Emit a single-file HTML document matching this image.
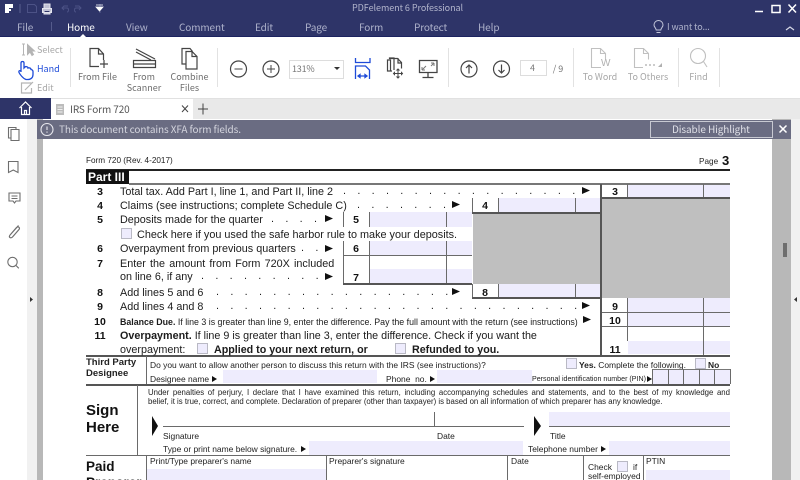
<!DOCTYPE html>
<html><head><meta charset="utf-8"><style>
html,body{margin:0;padding:0;width:800px;height:480px;overflow:hidden;background:#fff}
#r{position:relative;width:800px;height:480px;overflow:hidden;font-family:"Liberation Sans",sans-serif;color:#1a1a1a}
#r div,#r span{position:absolute;white-space:nowrap}
.u{font-family:"Noto Sans CJK SC","DejaVu Sans",sans-serif;line-height:14px}
.tab{top:20px;font-size:10px;letter-spacing:-.1px;color:#aeb2cb}
.rb{font-size:9px;color:#6e6e6e;text-align:center;transform:translateX(-50%);line-height:12px}
.lb{font-size:9px;color:#6e6e6e;line-height:12px}
.dim{color:#a8a8a8}
.sep{width:1px;top:48px;height:39px;background:#e2e2e2}
.t{font-size:10.8px;line-height:12px;color:#1c1c1c}
.d{font-size:10.85px;line-height:12px;color:#1c1c1c;word-spacing:8.300px}
.n{font-size:10.5px;font-weight:bold;line-height:12px;color:#111;text-align:center}
.s{font-size:8.45px;line-height:10px;color:#222}
.f{background:#eeecfd}
.h{background:#6a6a6a;height:1px}
.hh{background:#555;height:2px}
.v{background:#6a6a6a;width:1px}
.vv{background:#555;width:2px}
.g{background:#bfbfbf}
.cb{width:9px;height:9px;background:#eeecfd;border:1px solid #b9b9c4}
svg{position:absolute}
</style></head><body><div id="r">
<!-- title bar -->
<div style="left:0;top:0;width:800px;height:37px;background:#2e3468"></div>
<div style="left:0;top:36px;width:800px;height:1px;background:#1c2360"></div>
<svg style="left:0;top:0" width="800" height="40" fill="none">
<path d="M80 37l3-3 3 3z" fill="#fff"/>
<path d="M5 4h8v4H9v1h2v2H9v2H5z" fill="#fff"/>
<path d="M20 4v9M100 4v9" stroke="#5a6090"/>
<path d="M27.500 4.500h7l2 2v6h-9z" stroke="#4c5286"/>
<path d="M44 8V4h6v4M42.500 8.500h9v4h-9zM44 11v3h6v-3" stroke="#e4e5ee" fill="#bfc1d4"/>
<path d="M68 6h-4l-2 2 2 2M62 8h5c2 0 2 4 0 4M75 6h4l2 2-2 2M81 8h-5c-2 0-2 4 0 4" stroke="#4c5286"/>
<path d="M96 5h7M96 7h7l-3.500 4z" stroke="#fff" fill="#fff" stroke-width=".8"/>
<path d="M755 11.500h8" stroke="#fff" stroke-width="1.500"/>
<path d="M772 5.500h8v7h-8z" stroke="#fff" stroke-width="1.500"/>
<path d="M788.500 4.500l7.500 8M796 4.500l-7.500 8" stroke="#fff" stroke-width="1.500"/>
<path d="M51.500 22v9" stroke="#555b8c"/>
<path d="M654 25a4.500 4.500 0 1 1 9 0c0 2-2 3-2.200 5h-4.600c-.2-2-2.200-3-2.200-5zM656.500 32.500h4" stroke="#c3c6da"/>
<path d="M786 30l4-3 4 3" stroke="#d6d8e6" stroke-width="1.200"/>
</svg>
<div class="u" style="left:352px;top:1px;font-size:9px;letter-spacing:-.05px;color:#b2b5cc">PDFelement 6 Professional</div>
<div class="u tab" style="left:17px">File</div>
<div class="u tab" style="left:67px;color:#fff">Home</div>
<div class="u tab" style="left:126px">View</div>
<div class="u tab" style="left:179px">Comment</div>
<div class="u tab" style="left:255px">Edit</div>
<div class="u tab" style="left:305px">Page</div>
<div class="u tab" style="left:359px">Form</div>
<div class="u tab" style="left:414px">Protect</div>
<div class="u tab" style="left:478px">Help</div>
<div class="u tab" style="left:667px;font-size:9px">I want to...</div>

<!-- ribbon icons -->
<svg style="left:0;top:37px" width="800" height="62" fill="none" stroke="#444">
<g stroke="#b4b4b4"><path d="M22 7h3M22 18h3M23.500 7v11"/><path d="M27.500 7.500v10l2.500-2.500 2 3.500 1.500-1-2-3.500h3z" fill="#b4b4b4"/></g>
<path d="M22 35v-9c0-2 3-2 3 0v5l1-1c1-1 3 0 3 1 1-.5 3 0 3 1.500 1 0 2 1 2 2v3c0 3-2 5-5 5h-2c-3-1-6-5-7-7-.5-2 1-2.500 2-1z" stroke="#1e4bd8" stroke-width="1.300" transform="translate(-1 0)"/>
<g stroke="#b4b4b4"><path d="M31.500 46h-10v10h10v-5M25 53l8-8" stroke-width="1.200"/></g>
<!-- from file -->
<path d="M99 29.500h-9V11.500h8.500l5 5.500v6M98.500 11.500v5.500h5M100 27h8M104 23v8" stroke-width="1.200"/>
<!-- scanner -->
<path d="M136 12l19 10M136 15l15 8M133.500 23.500h22v7h-22zM134 27h21" stroke-width="1.200"/>
<!-- combine -->
<path d="M186 27h-4V11.500h8l2.500 3M186 14.500h6l5 5v12.500h-11zM192 14.500v5h5" stroke-width="1.200"/>
<circle cx="238.500" cy="32" r="8" stroke-width="1.200"/><path d="M234.500 32h8"/>
<circle cx="271" cy="32" r="8" stroke-width="1.200"/><path d="M267 32h8M271 28v8"/>
<g stroke="#1e4bd8" stroke-width="1.300"><path d="M355.500 21v4.500h14.500V21M355.500 42V29h10l4 4v9"/><path d="M358 39h9M358 39l2-1.500v3zM367 39l-2-1.500v3z"/></g>
<path d="M394 33V21h-4.500v.5h8l4 4v6M392 34h-1.500V23h-3v11h3M398 21v5h4" stroke-width="1.200"/>
<path d="M398 32v9M393.500 36.500h9M398 32l-1 1h2zM398 41l-1-1h2zM393.500 36.500l1-1v2zM402.500 36.500l-1-1v2z"/>
<path d="M419.500 23.500h17.500v12h-17.500zM428 36v4M422.500 40.500h11" stroke-width="1.300"/>
<path d="M422 33l4-4M422 33v-3M422 33h3M431 26h3M434 26v3M434 26l-3 3" stroke="#777"/>
<circle cx="469" cy="32" r="8" stroke-width="1.200"/><path d="M469 36.500v-8.500M466 31l3-3 3 3" stroke-width="1.200"/>
<circle cx="501.500" cy="32" r="8" stroke-width="1.200"/><path d="M501.500 27.500v8.500M498.500 33l3 3 3-3" stroke-width="1.200"/>
<g stroke="#c0c0c0" stroke-width="1.100"><path d="M601 30.500h-9.500V11.500h9l5 5v6M600.500 11.500v5h5"/><path d="M643 30.500h-8.500V11.500h9l5 5v6M643.500 11.500v5h5"/><circle cx="698" cy="19" r="7.500"/><path d="M703.500 24.500l3.500 5.500"/></g>
<path d="M645 28h2M649 28h2M653 28h2" stroke="#9a9a9a"/>
<path d="M658 30h4v-4z" fill="#b0b0b0" stroke="none"/>
</svg>
<div style="left:601px;top:59px;font-size:10px;color:#b0b0b0;line-height:10px">W</div>
<div class="u rb" style="left:97.500px;top:71px">From File</div>
<div class="u rb" style="left:144px;top:71px">From</div>
<div class="u rb" style="left:144px;top:82px">Scanner</div>
<div class="u rb" style="left:189.500px;top:71px">Combine</div>
<div class="u rb" style="left:189.500px;top:82px">Files</div>
<div class="u lb dim" style="left:37px;top:44px">Select</div>
<div class="u lb" style="left:37px;top:63px;color:#1e4bd8">Hand</div>
<div class="u lb dim" style="left:37px;top:82px">Edit</div>
<div class="u rb dim" style="left:600px;top:71px">To Word</div>
<div class="u rb dim" style="left:648px;top:71px">To Others</div>
<div class="u rb dim" style="left:698.500px;top:71px">Find</div>
<div class="u rb" style="left:558px;top:63px;color:#777">/ 9</div>
<div class="sep" style="left:70px"></div><div class="sep" style="left:217px"></div><div class="sep" style="left:448px"></div><div class="sep" style="left:573px"></div><div class="sep" style="left:678px"></div><div class="sep" style="left:719px"></div>
<div style="left:289px;top:60px;width:53px;height:17px;border:1px solid #ddd"></div>
<div class="u" style="left:292px;top:62px;font-size:9px;letter-spacing:-.2px;color:#777">131%</div>
<svg style="left:334px;top:67px" width="7" height="4"><path d="M0 0h6l-3 3z" fill="#333"/></svg>
<div style="left:520px;top:60px;width:25px;height:14px;border:1px solid #ddd"></div>
<div class="u" style="left:530px;top:61px;font-size:9px;color:#777">4</div>

<!-- tab bar -->
<div style="left:0;top:98px;width:800px;height:21px;background:#e9e9e9;border-top:1px solid #e1e1e1;box-sizing:border-box"></div>
<div style="left:0;top:98px;width:51px;height:21px;background:#2e3468"></div>
<div style="left:51px;top:99px;width:142px;height:20px;background:#fff"></div>
<svg style="left:0;top:98px" width="215" height="22" fill="none">
<path d="M19.500 10l6-6 6 6M21.500 9v7.500h8V9M24.500 16.500v-4h2v4" stroke="#fff" stroke-width="1.200"/>
<path d="M56 6h8v11h-8z" fill="#bcbcbc"/><path d="M57.500 9h5M57.500 11.500h5M57.500 14h5" stroke="#fff" stroke-width=".7"/>
<path d="M182 7.500l6 6.500M188 7.500l-6 6.500M198 11h10M203 5.500v11" stroke="#444" stroke-width="1"/>
</svg>
<div class="u" style="left:70px;top:102px;font-size:10px;letter-spacing:-.1px;color:#555">IRS Form 720</div>

<!-- viewer -->
<div style="left:0;top:119px;width:27px;height:361px;background:#fff"></div>
<div style="left:27px;top:119px;width:10px;height:361px;background:#f1f1f1"></div>
<div class="g" style="left:37px;top:119px;width:6px;height:361px;background:#b8b8b8"></div>
<div style="left:772px;top:119px;width:19px;height:361px;background:#b8b8b8"></div>
<div style="left:791px;top:119px;width:9px;height:361px;background:#f1f1f1"></div>
<div style="left:783px;top:243px;width:4px;height:14px;background:#6e6e6e"></div>
<svg style="left:0;top:119px" width="800" height="190" fill="none">
<g stroke="#6e6e6e" stroke-width="1.100">
<path d="M11 10.500h8v11h-8zM11 19H8.500V8.500h7.500v2"/>
<path d="M8.500 42.500h9.500v11l-4.750-2.500-4.750 2.500z"/>
<path d="M9 74h11v8h-4l-1.500 2-1.500-2H9zM11.500 77h6M11.500 79.500h6"/>
<path d="M18 107l-8 9c-2.500 2.500 0 4.500 2 2.500l6.500-7.500c1.500-2-1-3.500-2.500-2l-6 7" stroke-width="1.200" transform="translate(.5 -.5)"/>
<circle cx="12.500" cy="143" r="4.700"/><path d="M16 146.500l2.800 2.800"/>
</g>
<path d="M30 178l3 2.500-3 2.500zM797 178l-3 2.500 3 2.500z" fill="#333"/>
</svg>

<!-- page form -->
<div class="s" style="left:86px;top:156px;font-size:8.2px">Form 720 (Rev. 4-2017)</div>
<div class="s" style="left:699px;top:157px;font-size:8.2px">Page</div>
<div style="left:722px;top:154px;font-size:13px;font-weight:bold;line-height:14px;color:#111">3</div>
<div class="hh" style="left:86px;top:169px;width:644px;background:#222"></div>
<div style="left:86px;top:170px;width:43px;height:14px;background:#111"></div>
<div style="left:88px;top:170px;color:#fff;font-size:12px;font-weight:bold;line-height:14px">Part III</div>
<div class="h" style="left:129px;top:183px;width:601px;height:2px;background:#777"></div>

<!-- fills -->
<div class="f" style="left:628px;top:185px;width:102px;height:13px"></div>
<div class="g" style="left:602px;top:199px;width:128px;height:99px"></div>
<div class="g" style="left:473px;top:213px;width:128px;height:71px"></div>
<div class="f" style="left:498px;top:198px;width:103px;height:14px"></div>
<div class="f" style="left:498px;top:284px;width:103px;height:14px"></div>
<div class="f" style="left:369px;top:212px;width:103px;height:15px"></div>
<div class="f" style="left:369px;top:241px;width:103px;height:14px"></div>
<div class="f" style="left:369px;top:269px;width:103px;height:14px"></div>
<div class="f" style="left:628px;top:298px;width:102px;height:14px"></div>
<div class="f" style="left:628px;top:313px;width:102px;height:13px"></div>
<div class="f" style="left:628px;top:341px;width:102px;height:13px"></div>

<!-- lines right -->
<div class="vv" style="left:600px;top:184px;width:2px;height:171px"></div>
<div class="v" style="left:627px;top:184px;height:14px"></div>
<div class="v" style="left:703px;top:184px;height:14px"></div>
<div class="hh" style="left:600px;top:197px;width:130px"></div>
<div class="v" style="left:703px;top:298px;height:57px"></div>
<div class="v" style="left:627px;top:298px;height:43px"></div>
<div class="h" style="left:602px;top:312px;width:128px"></div>
<div class="h" style="left:602px;top:326px;width:128px"></div>
<div class="hh" style="left:86px;top:355px;width:644px"></div>
<!-- lines mid -->
<div class="v" style="left:472px;top:198px;height:15px"></div>
<div class="v" style="left:498px;top:198px;height:14px"></div>
<div class="v" style="left:575px;top:198px;height:14px"></div>
<div class="hh" style="left:472px;top:212px;width:129px"></div>
<div class="v" style="left:472px;top:284px;height:14px"></div>
<div class="v" style="left:498px;top:284px;height:14px"></div>
<div class="v" style="left:575px;top:284px;height:14px"></div>
<div class="hh" style="left:472px;top:297px;width:129px"></div>
<!-- lines left -->
<div class="v" style="left:343px;top:212px;height:15px"></div>
<div class="v" style="left:369px;top:212px;height:15px"></div>
<div class="v" style="left:446px;top:212px;height:15px"></div>
<div class="v" style="left:343px;top:241px;height:43px"></div>
<div class="v" style="left:369px;top:241px;height:43px"></div>
<div class="v" style="left:446px;top:241px;height:43px"></div>
<div class="h" style="left:343px;top:255px;width:129px"></div>
<div class="hh" style="left:343px;top:283px;width:129px"></div>

<!-- numbers -->
<div class="n" style="left:90px;top:186px;width:20px">3</div>
<div class="n" style="left:90px;top:200px;width:20px">4</div>
<div class="n" style="left:90px;top:214px;width:20px">5</div>
<div class="n" style="left:90px;top:243px;width:20px">6</div>
<div class="n" style="left:90px;top:258px;width:20px">7</div>
<div class="n" style="left:90px;top:287px;width:20px">8</div>
<div class="n" style="left:90px;top:301px;width:20px">9</div>
<div class="n" style="left:90px;top:316px;width:20px">10</div>
<div class="n" style="left:90px;top:330px;width:20px">11</div>
<div class="n" style="left:604px;top:186px;width:22px">3</div>
<div class="n" style="left:474px;top:200px;width:22px">4</div>
<div class="n" style="left:345px;top:214px;width:22px">5</div>
<div class="n" style="left:345px;top:243px;width:22px">6</div>
<div class="n" style="left:345px;top:272px;width:22px">7</div>
<div class="n" style="left:474px;top:287px;width:22px">8</div>
<div class="n" style="left:604px;top:301px;width:22px">9</div>
<div class="n" style="left:604px;top:315px;width:22px">10</div>
<div class="n" style="left:604px;top:344px;width:22px">11</div>

<!-- text rows -->
<div class="t" style="left:120px;top:186px">Total tax. Add Part I, line 1, and Part II, line 2</div>
<div class="d" style="left:343px;top:185px">. . . . . . . . . . . . . . . . .</div>
<div class="t" style="left:120px;top:200px">Claims (see instructions; complete Schedule C)</div>
<div class="d" style="left:357px;top:199px">. . . . . . .</div>
<div class="t" style="left:120px;top:214px">Deposits made for the quarter</div>
<div class="d" style="left:271px;top:213px">. . . .</div>
<div class="cb" style="left:121px;top:228px"></div>
<div class="t" style="left:137px;top:229px;font-size:10.85px">Check here if you used the safe harbor rule to make your deposits.</div>
<div class="t" style="left:120px;top:243px">Overpayment from previous quarters</div>
<div class="d" style="left:301px;top:242px">. .</div>
<div class="t" style="left:120px;top:258px;word-spacing:1.200px">Enter the amount from Form 720X included</div>
<div class="t" style="left:120px;top:271px">on line 6, if any</div>
<div class="d" style="left:201px;top:270px">. . . . . . . . .</div>
<div class="t" style="left:120px;top:287px">Add lines 5 and 6</div>
<div class="d" style="left:216px;top:286px">. . . . . . . . . . . . . . . . .</div>
<div class="t" style="left:120px;top:301px">Add lines 4 and 8</div>
<div class="d" style="left:216px;top:300px">. . . . . . . . . . . . . . . . . . . . . . . . . .</div>
<div class="t" style="left:120px;top:316px;font-size:9.200px;transform:scaleX(.96);transform-origin:0 50%"><b>Balance Due.</b> If line 3 is greater than line 9, enter the difference. Pay the full amount with the return (see instructions)</div>
<div class="t" style="left:120px;top:330px;font-size:10.75px"><b>Overpayment.</b> If line 9 is greater than line 3, enter the difference. Check if you want the</div>
<div class="t" style="left:120px;top:344px">overpayment:</div>
<div class="cb" style="left:197px;top:343px"></div>
<div class="t" style="left:214px;top:344px;font-weight:bold;font-size:10.7px">Applied to your next return, or</div>
<div class="cb" style="left:395px;top:343px"></div>
<div class="t" style="left:412px;top:344px;font-weight:bold;font-size:10.7px">Refunded to you.</div>
<svg style="left:0;top:180px" width="800" height="280" fill="#111">
<path d="M582 7v7l8-3.500zM452 21v7l8-3.500zM325 35v7l8-3.500zM325 65v7l8-3.500zM325 93v7l8-3.500zM452 108v7l8-3.500zM582 122v7l8-3.500zM583 136v7l8-3.500z"/>
<path d="M152 236v20l6-10zM534 236v20l7-10z"/>
<path d="M212 196v6l5-3zM430 196v6l5-3zM647 196v6l5-3zM301 266v6l5-3zM601 266v6l5-3z"/>
</svg>

<!-- third party -->
<div style="left:86px;top:357px;font-size:9.500px;font-weight:bold;line-height:11px;color:#222">Third Party<br>Designee</div>
<div class="v" style="left:146px;top:356px;height:28px"></div>
<div class="s" style="left:150px;top:360px">Do you want to allow another person to discuss this return with the IRS (see instructions)?</div>
<div class="cb" style="left:566px;top:358px"></div>
<div class="s" style="left:579px;top:360px"><b>Yes.</b> Complete the following.</div>
<div class="cb" style="left:695px;top:358px"></div>
<div class="s" style="left:708px;top:360px"><b>No</b></div>
<div class="s" style="left:150px;top:374px">Designee name</div>
<div class="f" style="left:223px;top:370px;width:154px;height:13px"></div>
<div class="s" style="left:386px;top:374px">Phone &nbsp;no.</div>
<div class="f" style="left:437px;top:370px;width:95px;height:13px"></div>
<div class="s" style="left:532px;top:374px;font-size:7.100px">Personal identification number (PIN)</div>
<div class="f" style="left:652px;top:369px;width:78px;height:14px;border-top:1px solid #777"></div>
<div class="v" style="left:652px;top:369px;height:15px"></div><div class="v" style="left:668px;top:369px;height:15px"></div><div class="v" style="left:683px;top:369px;height:15px"></div><div class="v" style="left:699px;top:369px;height:15px"></div><div class="v" style="left:714px;top:369px;height:15px"></div><div class="v" style="left:730px;top:369px;height:15px"></div>
<div class="hh" style="left:86px;top:384px;width:644px"></div>

<!-- sign here -->
<div style="left:86px;top:402px;font-size:15px;font-weight:bold;line-height:17px;color:#111">Sign<br>Here</div>
<div class="v" style="left:137px;top:385px;height:70px"></div>
<div class="s" style="left:148px;top:388px;font-size:7.800px;width:582px;white-space:normal;text-align:justify;text-align-last:justify">Under penalties of perjury, I declare that I have examined this return, including accompanying schedules and statements, and to the best of my knowledge and</div>
<div class="s" style="left:148px;top:397px;font-size:7.800px">belief, it is true, correct, and complete. Declaration of preparer (other than taxpayer) is based on all information of which preparer has any knowledge.</div>
<div class="v" style="left:434px;top:412px;height:15px"></div>
<div class="h" style="left:163px;top:426px;width:361px"></div>
<div class="f" style="left:549px;top:412px;width:181px;height:14px"></div>
<div class="h" style="left:549px;top:426px;width:181px"></div>
<div class="s" style="left:163px;top:431px">Signature</div>
<div class="s" style="left:437px;top:431px">Date</div>
<div class="s" style="left:550px;top:431px">Title</div>
<div class="s" style="left:163px;top:444px">Type or print name below signature.</div>
<div class="f" style="left:309px;top:441px;width:214px;height:14px"></div>
<div class="s" style="left:528px;top:444px">Telephone number</div>
<div class="f" style="left:609px;top:441px;width:121px;height:14px"></div>
<div class="h" style="left:86px;top:455px;width:644px"></div>

<!-- paid -->
<div style="left:86px;top:459px;font-size:13.500px;font-weight:bold;line-height:15.500px;color:#111">Paid<br>Preparer</div>
<div class="v" style="left:146px;top:456px;height:24px"></div>
<div class="v" style="left:326px;top:456px;height:24px"></div>
<div class="v" style="left:507px;top:456px;height:24px"></div>
<div class="v" style="left:583px;top:456px;height:24px"></div>
<div class="v" style="left:643px;top:456px;height:24px"></div>
<div class="f" style="left:147px;top:469px;width:179px;height:11px"></div>
<div class="f" style="left:646px;top:470px;width:84px;height:10px"></div>
<div class="s" style="left:150px;top:456px">Print/Type preparer's name</div>
<div class="s" style="left:329px;top:456px">Preparer's signature</div>
<div class="s" style="left:511px;top:456px">Date</div>
<div class="s" style="left:588px;top:462px">Check</div>
<div class="cb" style="left:617px;top:461px"></div>
<div class="s" style="left:633px;top:462px">if</div>
<div class="s" style="left:588px;top:471px">self-employed</div>
<div class="s" style="left:646px;top:456px">PTIN</div>

<!-- notice bar -->
<div style="left:37px;top:120px;width:754px;height:19px;background:#6a6c82"></div>
<svg style="left:37px;top:120px" width="30" height="20" fill="none"><circle cx="10" cy="9.500" r="6" stroke="#e8e8ee" stroke-width="1.100"/><path d="M10 6.500v3.500M10 11.500v1.200" stroke="#e8e8ee" stroke-width="1.100"/></svg>
<div class="u" style="left:59px;top:122px;font-size:10px;letter-spacing:-.1px;color:#d4d5de">This document contains XFA form fields.</div>
<div style="left:650px;top:121px;width:121px;height:15px;border:1px solid #c8c9d2"></div>
<div class="u" style="left:672px;top:122px;font-size:10px;letter-spacing:-.1px;color:#e0e1e8">Disable Highlight</div>
<svg style="left:778px;top:124px" width="12" height="12" fill="none"><path d="M1.500 1.500l7 7M8.500 1.500l-7 7" stroke="#fff" stroke-width="1.500"/></svg>
</div></body></html>
